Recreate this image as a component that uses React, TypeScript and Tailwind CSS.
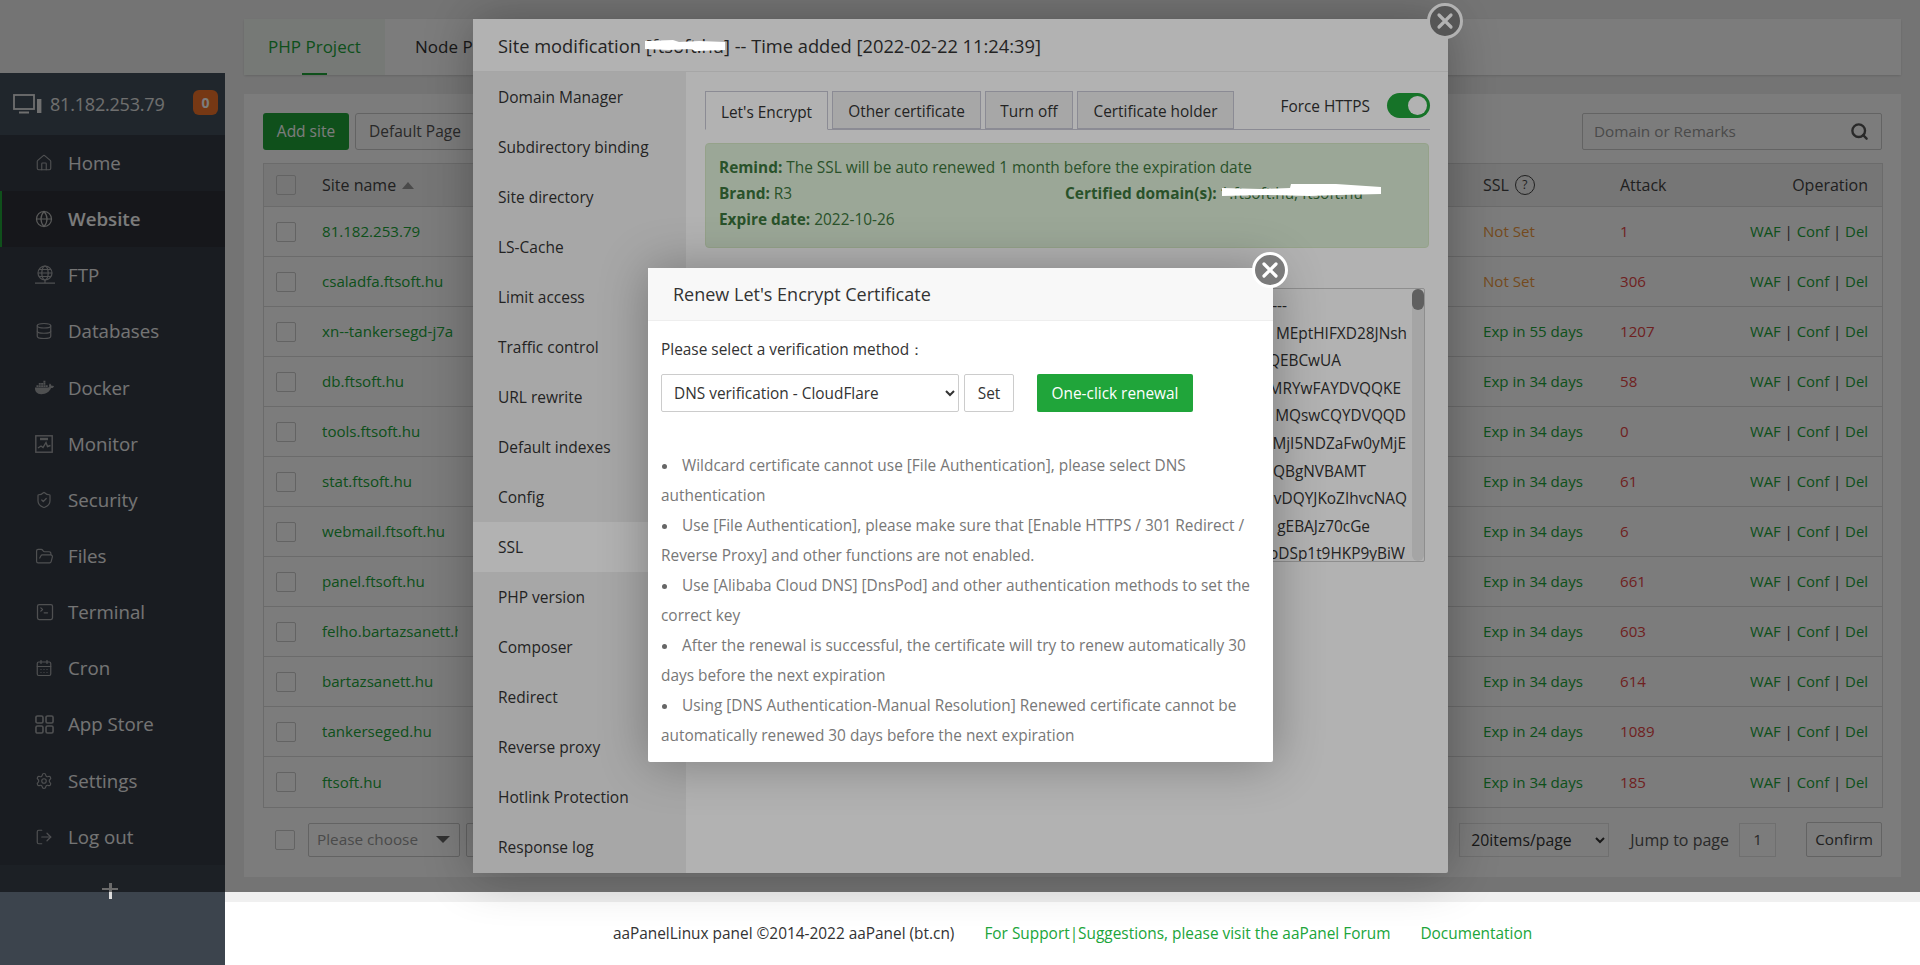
import React from "react";
import {
  Home,
  Globe,
  Database,
  ShieldCheck,
  FolderOpen,
  SquareTerminal,
  CalendarDays,
  Settings,
  LogOut,
  Search,
} from "lucide-react";
import { FaDocker } from "react-icons/fa";

const iconCls = "w-[18px] h-[18px]";

const FtpIcon = () => (
  <svg viewBox="0 0 20 20" className="w-[20px] h-[20px]" fill="none" stroke="currentColor" strokeWidth="1.2">
    <circle cx="10" cy="8" r="7" />
    <ellipse cx="10" cy="8" rx="3.2" ry="7" />
    <path d="M3 8h14M4 4.5h12M4 11.5h12M10 15v3M0 18.2h20" />
  </svg>
);

const MonitorIcon = () => (
  <svg viewBox="0 0 18 18" className={iconCls} fill="none" stroke="currentColor" strokeWidth="1.4">
    <rect x="0.8" y="0.8" width="16.4" height="16.4" />
    <path d="M3 13l3-2 2 1.5 3-5 1.5 4 3-1" />
    <path d="M5 4h8" strokeWidth="2.4" />
  </svg>
);

const AppsIcon = () => (
  <svg viewBox="0 0 20 20" className="w-[19px] h-[19px]" fill="none" stroke="currentColor" strokeWidth="1.7">
    <rect x="1" y="1" width="7.4" height="7.4" rx="1.6" />
    <rect x="11.6" y="1" width="7.4" height="7.4" rx="1.6" />
    <rect x="1" y="11.6" width="7.4" height="7.4" rx="1.6" />
    <rect x="11.6" y="11.6" width="7.4" height="7.4" rx="1.6" />
  </svg>
);

const menu: { label: string; icon: React.ReactNode; active?: boolean }[] = [
  { label: "Home", icon: <Home className={iconCls} strokeWidth={1.5} /> },
  { label: "Website", icon: <Globe className={iconCls} strokeWidth={1.6} />, active: true },
  { label: "FTP", icon: <FtpIcon /> },
  { label: "Databases", icon: <Database className={iconCls} strokeWidth={1.6} /> },
  { label: "Docker", icon: <FaDocker className="w-[19px] h-[19px]" /> },
  { label: "Monitor", icon: <MonitorIcon /> },
  { label: "Security", icon: <ShieldCheck className={iconCls} strokeWidth={1.6} /> },
  { label: "Files", icon: <FolderOpen className="w-[19px] h-[19px]" strokeWidth={1.5} /> },
  { label: "Terminal", icon: <SquareTerminal className="w-[20px] h-[20px]" strokeWidth={1.5} /> },
  { label: "Cron", icon: <CalendarDays className={iconCls} strokeWidth={1.6} /> },
  { label: "App Store", icon: <AppsIcon /> },
  { label: "Settings", icon: <Settings className={iconCls} strokeWidth={1.5} /> },
  { label: "Log out", icon: <LogOut className={iconCls} strokeWidth={1.6} /> },
];

const sites: [string, string, string][] = [
  ["81.182.253.79", "Not Set", "1"],
  ["csaladfa.ftsoft.hu", "Not Set", "306"],
  ["xn--tankersegd-j7a", "Exp in 55 days", "1207"],
  ["db.ftsoft.hu", "Exp in 34 days", "58"],
  ["tools.ftsoft.hu", "Exp in 34 days", "0"],
  ["stat.ftsoft.hu", "Exp in 34 days", "61"],
  ["webmail.ftsoft.hu", "Exp in 34 days", "6"],
  ["panel.ftsoft.hu", "Exp in 34 days", "661"],
  ["felho.bartazsanett.hu", "Exp in 34 days", "603"],
  ["bartazsanett.hu", "Exp in 34 days", "614"],
  ["tankerseged.hu", "Exp in 24 days", "1089"],
  ["ftsoft.hu", "Exp in 34 days", "185"],
];

const siteMenu = [
  "Domain Manager",
  "Subdirectory binding",
  "Site directory",
  "LS-Cache",
  "Limit access",
  "Traffic control",
  "URL rewrite",
  "Default indexes",
  "Config",
  "SSL",
  "PHP version",
  "Composer",
  "Redirect",
  "Reverse proxy",
  "Hotlink Protection",
  "Response log",
];

const certLines: [string, string][] = [
  ["-----", "pr-[137px]"],
  ["MEptHIFXD28JNsh", "pr-[17px]"],
  ["QEBCwUA", "pr-[83px]"],
  ["MRYwFAYDVQQKE", "pr-[23px]"],
  ["MQswCQYDVQQD", "pr-[18px]"],
  ["MjI5NDZaFw0yMjE", "pr-[18px]"],
  ["QBgNVBAMT", "pr-[58px]"],
  ["vDQYJKoZIhvcNAQ", "pr-[17px]"],
  ["gEBAJz70cGe", "pr-[54px]"],
  ["oDSp1t9HKP9yBiW", "pr-[19px]"],
];

const tips = [
  "Wildcard certificate cannot use [File Authentication], please select DNS authentication",
  "Use [File Authentication], please make sure that [Enable HTTPS / 301 Redirect / Reverse Proxy] and other functions are not enabled.",
  "Use [Alibaba Cloud DNS] [DnsPod] and other authentication methods to set the correct key",
  "After the renewal is successful, the certificate will try to renew automatically 30 days before the next expiration",
  "Using [DNS Authentication-Manual Resolution] Renewed certificate cannot be automatically renewed 30 days before the next expiration",
];

const CloseBtn = ({ className }: { className: string }) => (
  <svg viewBox="0 0 36 36" className={className}>
    <circle cx="18" cy="18" r="16.5" fill="#7b7b7b" stroke="#ffffff" strokeWidth="3" />
    <path d="M12 12l12 12M24 12L12 24" stroke="#ffffff" strokeWidth="3.2" strokeLinecap="round" />
  </svg>
);

const Check = () => <span className="block w-[20px] h-[20px] border border-[#ccc] rounded-[2px] bg-transparent" />;

const Sidebar = () => (
  <aside className="w-[225px] shrink-0 mt-[73px] flex flex-col bg-[#3c444d] relative">
    <div className="h-[62px] bg-[#434f5b] flex items-center pl-[13px] text-[#e4e4e4]">
      <svg viewBox="0 0 29 20" className="w-[29px] h-[20px]" fill="none" stroke="currentColor">
        <rect x="1" y="1" width="20" height="14" strokeWidth="1.8" />
        <path d="M6 18.5h10" strokeWidth="2" />
        <rect x="24" y="5" width="4.4" height="14" fill="currentColor" stroke="none" />
      </svg>
      <span className="ml-[8px] text-[18px] tracking-[-0.2px]">81.182.253.79</span>
      <span className="ml-auto mr-[7px] -mt-[3px] w-[25px] h-[25px] rounded-[6px] bg-[#f2742a] text-white text-[14px] font-bold flex items-center justify-center">
        0
      </span>
    </div>
    <nav className="bg-[#353b46] pl-[2px] h-[730px]">
      {menu.map((m) => (
        <div
          key={m.label}
          className={
            m.active
              ? "h-[56.15px] -ml-[2px] border-l-2 border-[#20a53a] bg-[#2f3239] flex items-center pl-[33px] text-white"
              : "h-[56.15px] flex items-center pl-[33px] text-[#f0f0f0]"
          }
        >
          <span className={m.active ? "w-[33px] text-[#bbbbbb]" : "w-[33px] text-[#a3a5a8]"}>{m.icon}</span>
          <span className={m.active ? "text-[18.7px] font-semibold" : "text-[18.7px]"}>{m.label}</span>
        </div>
      ))}
    </nav>
    <div className="absolute left-[102px] top-[810px] w-[16px] h-[16px] text-[#dddddd]">
      <span className="absolute left-[7px] top-0 w-[3px] h-[16px] bg-current" />
      <span className="absolute left-0 top-[5px] w-[16px] h-[2px] bg-current" />
    </div>
  </aside>
);

const SiteTable = () => (
  <div className="mt-[13px] border border-[#dddddd] w-[1620px] text-[15.1px]">
    <div className="h-[43px] bg-[#f3f3f3] border-b border-[#dddddd] flex items-center text-[#444444] text-[16px]">
      <div className="w-[58px] pl-[12px]">
        <Check />
      </div>
      <div className="flex-1 flex items-center gap-[6px]">
        Site name
        <span className="w-0 h-0 border-x-[6px] border-x-transparent border-b-[7px] border-b-[#999999]" />
      </div>
      <div className="w-[137px] flex items-center gap-[6px]">
        SSL
        <span className="w-[20px] h-[20px] rounded-full border border-[#444444] text-[12px] flex items-center justify-center">?</span>
      </div>
      <div className="w-[107px]">Attack</div>
      <div className="w-[155px] pr-[14px] text-right">Operation</div>
    </div>
    {sites.map(([name, ssl, attack], i) => (
      <div key={name} className={i === 11 ? "h-[50px] flex items-center" : "h-[50px] border-b border-[#dddddd] flex items-center"}>
        <div className="w-[58px] pl-[12px]">
          <Check />
        </div>
        <div className="flex-1">
          <div className="w-[136px] overflow-hidden whitespace-nowrap text-[#20a53a]">{name}</div>
        </div>
        <div className={ssl === "Not Set" ? "w-[137px] text-[#f0993e]" : "w-[137px] text-[#20a53a]"}>{ssl}</div>
        <div className="w-[107px] text-[#e54545]">{attack}</div>
        <div className="w-[155px] pr-[14px] text-right whitespace-nowrap text-[#20a53a] text-[14.9px]">
          WAF <span className="text-[#444444]">|</span> Conf <span className="text-[#444444]">|</span> Del
        </div>
      </div>
    ))}
  </div>
);

const SiteModal = () => (
  <div className="absolute left-[473px] top-[19px] w-[975px] h-[854px] bg-white rounded-[2px] shadow-[1px_1px_50px_rgba(0,0,0,0.3)] flex flex-col text-[#333333]">
    <div className="h-[53px] shrink-0 pt-[2px] bg-white border-b border-[#eeeeee] flex items-center pl-[25px] text-[18.3px] whitespace-nowrap">
      Site modification [ftsoft.hu] -- Time added [2022-02-22 11:24:39]
    </div>
    <div className="flex flex-1 min-h-0">
      <div className="w-[213px] shrink-0 bg-[#f0f0f0] text-[15.5px]">
        {siteMenu.map((s) => (
          <div key={s} className={s === "SSL" ? "h-[50px] flex items-center pl-[25px] pt-[1px] bg-white" : "h-[50px] flex items-center pl-[25px] pt-[1px]"}>
            {s}
          </div>
        ))}
      </div>
      <div className="flex-1 px-[19px] pt-[19px] text-[15.4px]">
        <div className="h-[39px] border-b border-[#c8c8d4] flex gap-[4px] relative w-[725px]">
          <div className="w-[123px] h-[39px] pt-[4px] border border-[#c8c8d4] border-b-white bg-white flex items-center justify-center">Let's Encrypt</div>
          <div className="w-[149px] pt-[4px] border border-[#c8c8d4] bg-[#f0f0f0] flex items-center justify-center">Other certificate</div>
          <div className="w-[88px] pt-[4px] border border-[#c8c8d4] bg-[#f0f0f0] flex items-center justify-center">Turn off</div>
          <div className="w-[157px] pt-[4px] border border-[#c8c8d4] bg-[#f0f0f0] flex items-center justify-center">Certificate holder</div>
          <div className="ml-auto mt-[2px] flex h-[25px] items-center gap-[17px]">
            <span className="mt-[2px]">Force HTTPS</span>
            <span className="w-[43px] h-[25px] rounded-full bg-[#20a53a] flex items-center justify-end pr-[3px]">
              <span className="w-[19px] h-[19px] rounded-full bg-white" />
            </span>
          </div>
        </div>
        <div className="mt-[13px] h-[105px] w-[724px] rounded-[4px] border border-[#d6e9c6] bg-[#dff0d8] px-[13px] pt-[11px] text-[#3c763d] leading-[26px] relative">
          <div>
            <b>Remind:</b> The SSL will be auto renewed 1 month before the expiration date
          </div>
          <div>
            <b>Brand:</b> R3
          </div>
          <div>
            <b>Expire date:</b> 2022-10-26
          </div>
          <div className="absolute left-[359px] top-[37px] whitespace-nowrap">
            <b>Certified domain(s):</b> *.ftsoft.hu, ftsoft.hu
          </div>
        </div>
        <div className="mt-[16px] flex">
          <div className="w-[357px]">
            <div className="h-[24px]">Private key (KEY)</div>
          </div>
          <div>
            <div className="h-[24px]">Certificate (CRT/PEM)</div>
            <div className="w-[363px] h-[274px] border border-[#cccccc] rounded-[2px] bg-white relative overflow-hidden leading-[27.6px] pt-[3px]">
              {certLines.map(([t, pr]) => (
                <div key={t} className={`text-right whitespace-nowrap ${pr}`}>
                  {t}
                </div>
              ))}
              <div className="absolute right-0 top-0 w-[12px] h-full bg-[#ececec] rounded-[6px]">
                <div className="w-[12px] h-[21px] rounded-[6px] bg-[#888888]" />
              </div>
            </div>
          </div>
        </div>
      </div>
    </div>
    <CloseBtn className="absolute left-[954px] -top-[16px] w-[36px] h-[36px]" />
  </div>
);

const RenewModal = () => (
  <div className="absolute left-[648px] top-[268px] w-[625px] h-[494px] bg-white rounded-[2px] shadow-[1px_1px_50px_rgba(0,0,0,0.3)] text-[#333333]">
    <div className="h-[53px] bg-[#f8f8f8] border-b border-[#eeeeee] flex items-center pl-[25px] text-[18px]">
      Renew Let's Encrypt Certificate
    </div>
    <div className="px-[13px] text-[15.4px]">
      <div className="mt-[17px] h-[24px] flex items-center">Please select a verification method：</div>
      <div className="mt-[12px] flex items-center">
        <select className="w-[298px] h-[38px] border border-[#cccccc] rounded-[2px] pl-[8px] bg-white">
          <option>DNS verification - CloudFlare</option>
        </select>
        <button className="ml-[5px] w-[50px] h-[38px] pt-[2px] border border-[#cccccc] rounded-[2px]">Set</button>
        <button className="ml-[23px] w-[156px] h-[38px] pt-[2px] rounded-[2px] bg-[#20a53a] text-white">One-click renewal</button>
      </div>
      <ul className="mt-[39px] leading-[30px] text-[#777777] w-[600px]">
        {tips.map((t) => (
          <li key={t}>
            <span className="inline-block align-middle ml-[1px] mr-[15px] w-[5px] h-[5px] rounded-full bg-[#666666]" />
            {t}
          </li>
        ))}
      </ul>
    </div>
    <CloseBtn className="absolute left-[604px] -top-[16px] w-[36px] h-[36px]" />
  </div>
);

export default function App() {
  return (
    <div className="relative w-full h-[965px] overflow-hidden flex bg-[#f0f0f0] font-['Open_Sans','Noto_Sans',sans-serif]">
      <Sidebar />
      <main className="flex-1 flex flex-col min-w-0">
        <div className="h-[892px] px-[19px] pt-[19px]">
          <div className="h-[56px] bg-white shadow-sm flex text-[17px] text-[#333333]">
            <div className="w-[141px] bg-[#f3f9f4] text-[#20a53a] flex items-center justify-center relative">
              PHP Project
              <span className="absolute bottom-0 left-[58px] w-[25px] h-[2px] bg-[#20a53a]" />
            </div>
            <div className="pl-[30px] flex items-center">Node Project</div>
          </div>
          <div className="mt-[19px] h-[783px] bg-white px-[19px] pt-[19px]">
            <div className="flex justify-between h-[37px] text-[15.5px]">
              <div className="flex gap-[6px]">
                <button className="w-[86px] h-[37px] rounded-[3px] bg-[#20a53a] text-white">Add site</button>
                <button className="w-[120px] h-[37px] rounded-[3px] border border-[#cccccc] text-[#555555]">Default Page</button>
              </div>
              <div className="w-[300px] h-[37px] border border-[#cccccc] rounded-[2px] flex items-center pl-[11px] pr-[12px] text-[#999999]">
                <span className="flex-1 text-[15.3px]">Domain or Remarks</span>
                <Search className="w-[19px] h-[19px] text-[#555555]" strokeWidth={3} />
              </div>
            </div>
            <SiteTable />
            <div className="mt-[14px] h-[35px] flex items-center text-[15.3px]">
              <div className="ml-[12px]">
                <Check />
              </div>
              <div className="ml-[13px] w-[152px] h-[34px] border border-[#cccccc] rounded-[2px] flex items-center justify-between pl-[8px] pr-[9px] text-[#999999]">
                Please choose
                <span className="w-0 h-0 border-x-[7px] border-x-transparent border-t-[7px] border-t-[#666666]" />
              </div>
              <div className="ml-[6px] w-[90px] h-[34px] border border-[#cccccc] rounded-[2px]" />
              <select className="ml-auto w-[150px] h-[34px] border border-[#e4e4e4] pl-[7px] text-[#333333] bg-transparent text-[15.8px]">
                <option>20items/page</option>
              </select>
              <span className="ml-[21px] text-[16px] text-[#555555]">Jump to page</span>
              <div className="ml-[10px] w-[37px] h-[34px] border border-[#e4e4e4] flex items-center justify-center text-[#555555]">1</div>
              <div className="ml-[30px] w-[76px] h-[35px] border border-[#cccccc] rounded-[2px] flex items-center justify-center text-[#444444]">Confirm</div>
            </div>
          </div>
        </div>
        <div className="h-[10px]" />
        <footer className="h-[63px] bg-white flex items-center justify-center gap-[30px] text-[15.4px] text-[#333333] whitespace-nowrap">
          <span>aaPanelLinux panel ©2014-2022 aaPanel (bt.cn)</span>
          <span className="text-[#20a53a]">For Support|Suggestions, please visit the aaPanel Forum</span>
          <span className="text-[#20a53a]">Documentation</span>
        </footer>
      </main>
      <div className="absolute left-0 top-0 w-full h-[892px] bg-black/30" />
      <SiteModal />
      <div className="absolute left-0 top-0 w-full h-[892px] bg-black/30" />
      <RenewModal />
      {/* white scribbles painted over the screenshot, so above the shades */}
      <svg viewBox="0 0 82 13" className="absolute left-[644px] top-[38px] w-[82px] h-[13px]">
        <path d="M1 3l28-1 6 2 20-1 26 1v8l-30 1-4-2-22 1-24-1z" fill="#ffffff" />
      </svg>
      <svg viewBox="0 0 160 16" className="absolute left-[1221px] top-[183px] w-[160px] h-[16px]">
        <path d="M1 5l38 1 30-1 1-4 45 0 45 3v7l-42 1-30 1-42-1-45 1z" fill="#ffffff" />
      </svg>
    </div>
  );
}
